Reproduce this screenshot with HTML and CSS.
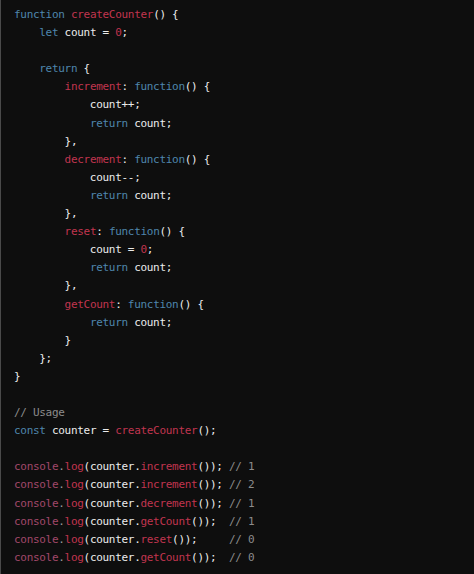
FILE: index.html
```html
<!DOCTYPE html>
<html lang="en">
<head>
<meta charset="utf-8">
<title>createCounter</title>
<link rel="stylesheet" href="styles.css">
</head>
<body>
<main class="frame">
<pre class="code"><code><span class="kw">function</span> <span class="fn">createCounter</span>() {
    <span class="kw">let</span> count = <span class="num">0</span>;

    <span class="kw">return</span> {
        <span class="fn">increment</span>: <span class="kw">function</span>() {
            count++;
            <span class="kw">return</span> count;
        },
        <span class="fn">decrement</span>: <span class="kw">function</span>() {
            count--;
            <span class="kw">return</span> count;
        },
        <span class="fn">reset</span>: <span class="kw">function</span>() {
            count = <span class="num">0</span>;
            <span class="kw">return</span> count;
        },
        <span class="fn">getCount</span>: <span class="kw">function</span>() {
            <span class="kw">return</span> count;
        }
    };
}

<span class="cm">// Usage</span>
<span class="kw">const</span> counter = <span class="fn">createCounter</span>();

<span class="obj">console</span><span class="dot">.</span><span class="fn">log</span>(counter.<span class="fn">increment</span>()); <span class="cm">// 1</span>
<span class="obj">console</span><span class="dot">.</span><span class="fn">log</span>(counter.<span class="fn">increment</span>()); <span class="cm">// 2</span>
<span class="obj">console</span><span class="dot">.</span><span class="fn">log</span>(counter.<span class="fn">decrement</span>()); <span class="cm">// 1</span>
<span class="obj">console</span><span class="dot">.</span><span class="fn">log</span>(counter.<span class="fn">getCount</span>());  <span class="cm">// 1</span>
<span class="obj">console</span><span class="dot">.</span><span class="fn">log</span>(counter.<span class="fn">reset</span>());     <span class="cm">// 0</span>
<span class="obj">console</span><span class="dot">.</span><span class="fn">log</span>(counter.<span class="fn">getCount</span>());  <span class="cm">// 0</span></code></pre>
</main>
</body>
</html>
```

FILE: styles.css
```css
html, body {
  margin: 0;
  padding: 0;
  background: #0e0e0e;
}

.frame {
  box-sizing: border-box;
  width: 474px;
  height: 574px;
  background: #0e0e0e;
  border-left: 1px solid #4a4a4a;
  padding: 6px 0 0 13px;
  overflow: hidden;
}

.code {
  margin: 0;
  font-family: "DejaVu Sans Mono", "Liberation Mono", monospace;
  font-size: 11px;
  letter-spacing: -0.3px;
  line-height: 18.1px;
  color: #ececec;
}

.kw { color: #4f86ad; }
.fn { color: #c1354f; }
.num { color: #c1354f; }
.obj { color: #a2486a; }
.dot { color: #9a9a9a; }
.cm { color: #8c8c8c; }
```
